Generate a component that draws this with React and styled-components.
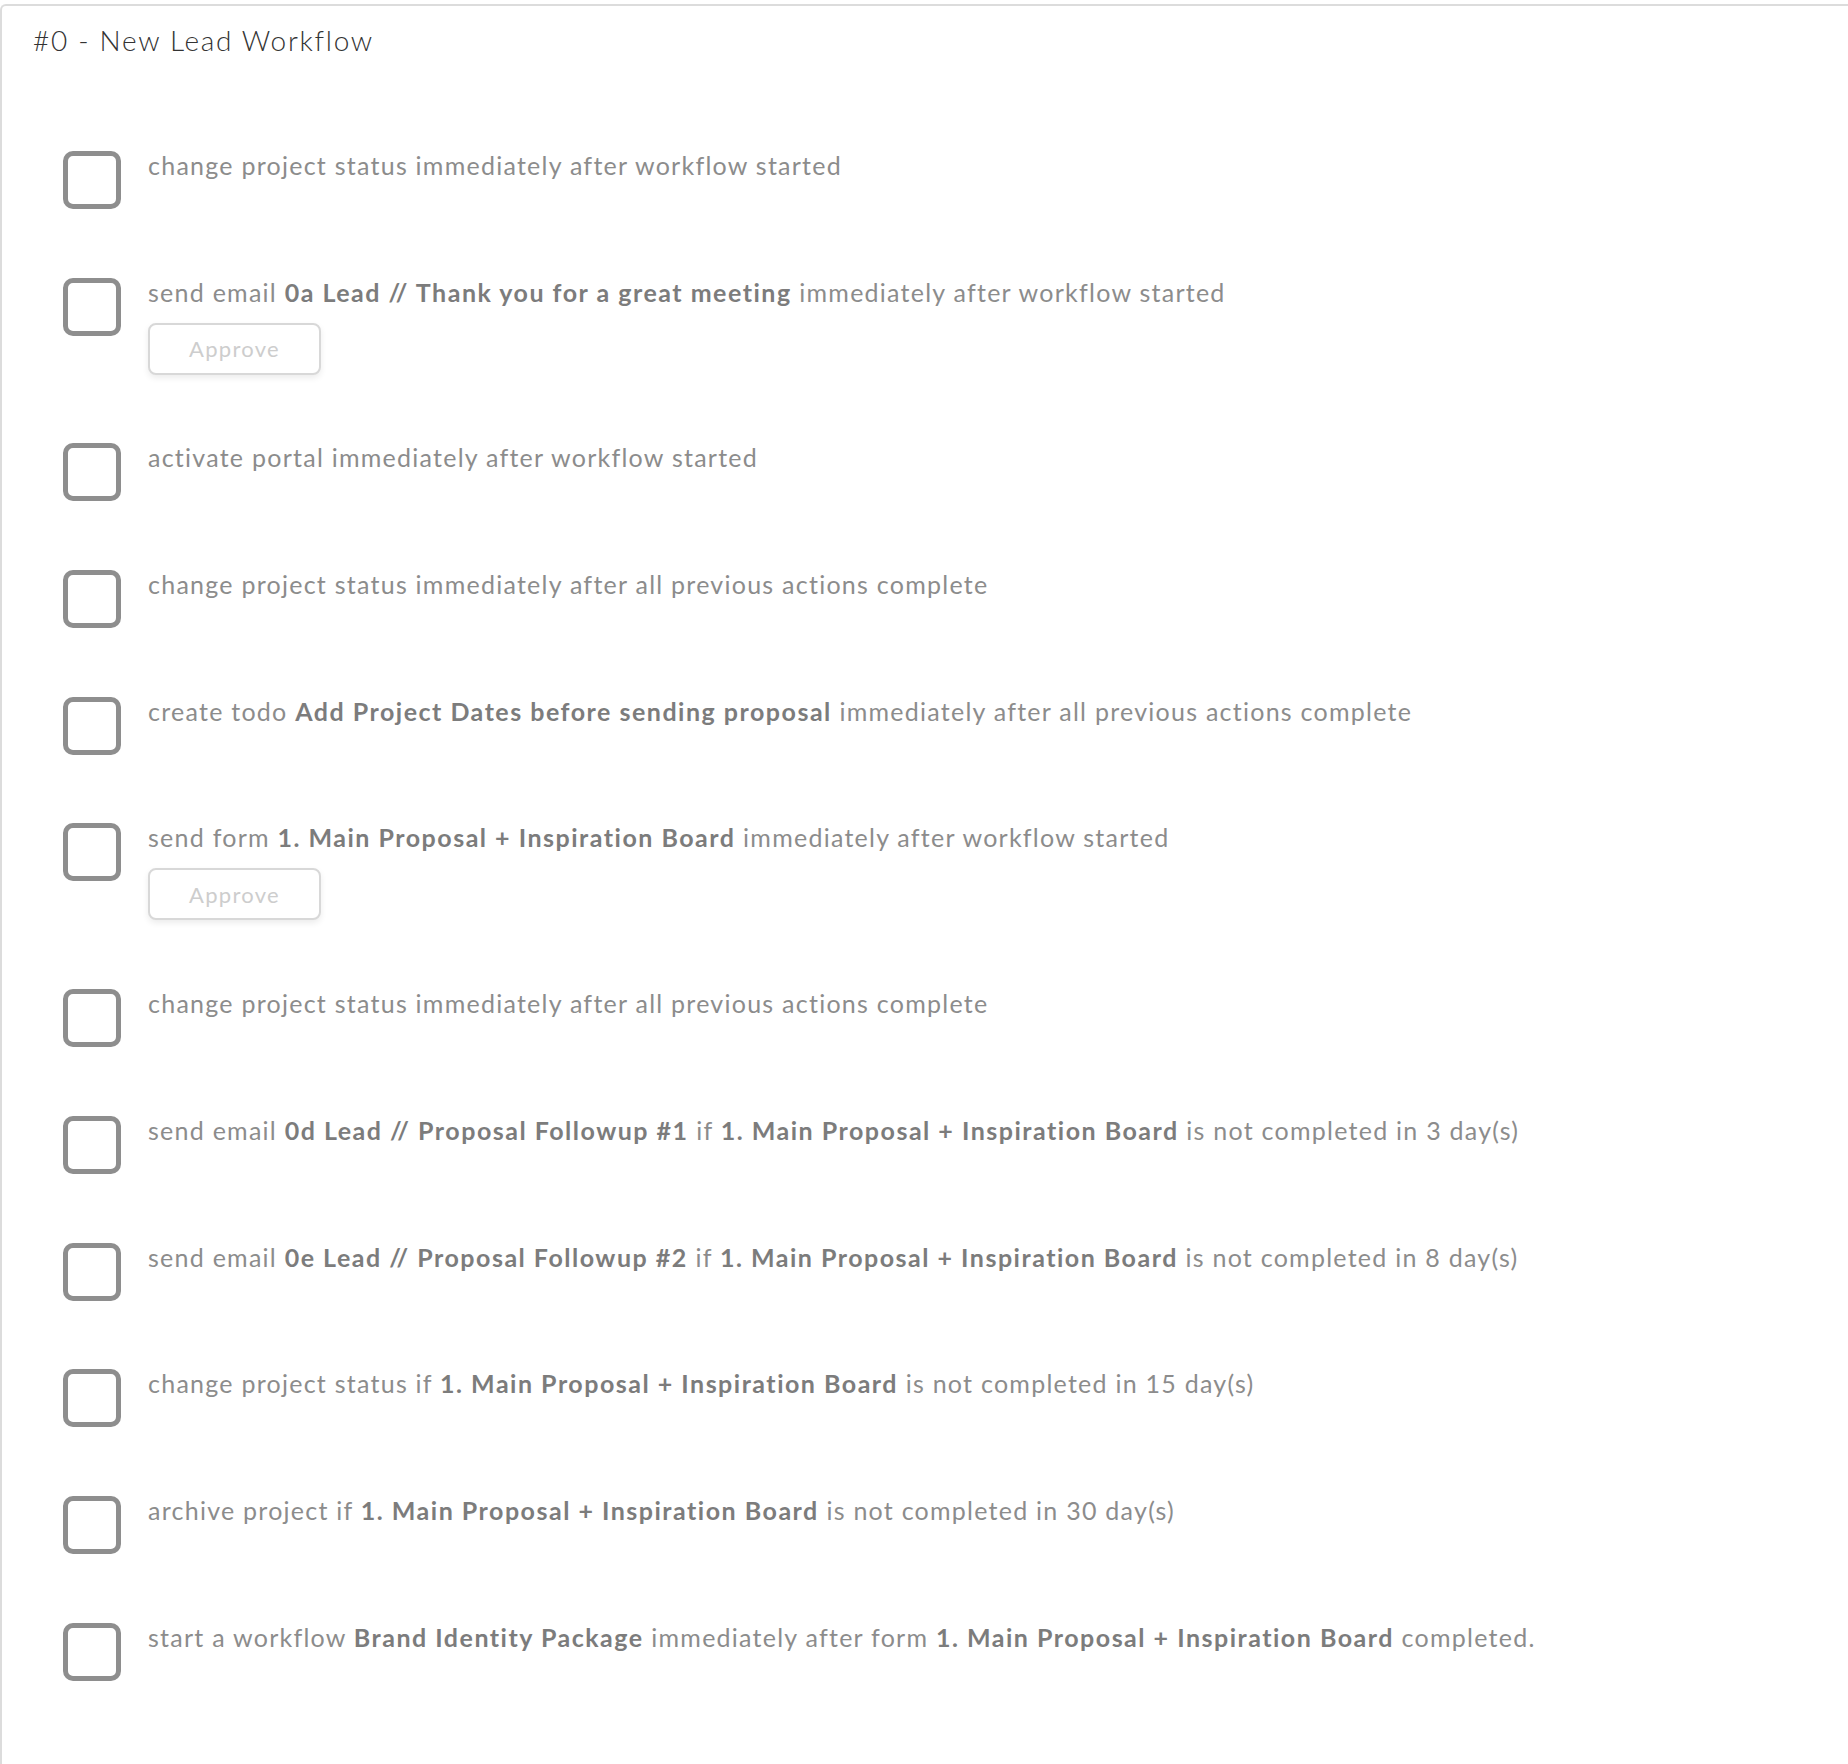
import React from 'react';
import styled, { createGlobalStyle } from 'styled-components';

const GlobalStyle = createGlobalStyle`
  html, body {
    margin: 0;
    padding: 0;
    background: #fff;
  }
  body {
    font-family: Lato, "Open Sans", sans-serif;
  }
`;

const Card = styled.section`
  margin-top: 4px;
  width: 1900px;
  min-height: 1800px;
  border-top: 2px solid #dcdcdc;
  border-left: 2px solid #dcdcdc;
  border-top-left-radius: 6px;
  padding: 14px 0 0 31px;
  box-sizing: border-box;
`;

const Title = styled.h1`
  margin: 0;
  font-size: 28px;
  line-height: 40px;
  font-weight: 300;
  letter-spacing: 1.7px;
  color: #333;
`;

const ActionList = styled.ul`
  list-style: none;
  margin: 0;
  padding: 91px 0 0 30px;
`;

const ActionItem = styled.li`
  display: flex;
  align-items: flex-start;
  gap: 27px;
  margin-bottom: 68.7px;
`;

const Checkbox = styled.span`
  flex: none;
  width: 58px;
  height: 58px;
  box-sizing: border-box;
  border: 5px solid #8e8e8e;
  border-radius: 10px;
`;

const Body = styled.div`
  display: flex;
  flex-direction: column;
  align-items: flex-start;
`;

const Sentence = styled.p`
  margin: 0;
  font-size: 25px;
  line-height: 28px;
  letter-spacing: 1.25px;
  color: #8c8c8c;

  b {
    font-weight: 700;
    letter-spacing: 1.5px;
    color: #7c7c7c;
  }
`;

const ApproveButton = styled.button`
  margin-top: 17px;
  width: 173px;
  height: 52px;
  border: 2px solid #d8d8d8;
  border-radius: 8px;
  background: #fff;
  box-shadow: 0 3px 6px rgba(0, 0, 0, 0.08);
  font-family: Lato, "Open Sans", sans-serif;
  font-size: 22px;
  letter-spacing: 1.3px;
  color: #cdcdcd;
  cursor: pointer;
`;

const FORM = '1. Main Proposal + Inspiration Board';

const actions = [
  { parts: ['change project status immediately after workflow started'] },
  {
    parts: ['send email ', { b: '0a Lead // Thank you for a great meeting' }, ' immediately after workflow started'],
    approve: true,
  },
  { parts: ['activate portal immediately after workflow started'] },
  { parts: ['change project status immediately after all previous actions complete'] },
  { parts: ['create todo ', { b: 'Add Project Dates before sending proposal' }, ' immediately after all previous actions complete'] },
  { parts: ['send form ', { b: FORM }, ' immediately after workflow started'], approve: true },
  { parts: ['change project status immediately after all previous actions complete'] },
  { parts: ['send email ', { b: '0d Lead // Proposal Followup #1' }, ' if ', { b: FORM }, ' is not completed in 3 day(s)'] },
  { parts: ['send email ', { b: '0e Lead // Proposal Followup #2' }, ' if ', { b: FORM }, ' is not completed in 8 day(s)'] },
  { parts: ['change project status if ', { b: FORM }, ' is not completed in 15 day(s)'] },
  { parts: ['archive project if ', { b: FORM }, ' is not completed in 30 day(s)'] },
  { parts: ['start a workflow ', { b: 'Brand Identity Package' }, ' immediately after form ', { b: FORM }, ' completed.'] },
];

const App = () => (
  <>
    <GlobalStyle />
    <Card>
      <Title>#0 - New Lead Workflow</Title>
      <ActionList>
        {actions.map((action, i) => (
          <ActionItem key={i}>
            <Checkbox />
            <Body>
              <Sentence>
                {action.parts.map((p, j) => (typeof p === 'string' ? p : <b key={j}>{p.b}</b>))}
              </Sentence>
              {action.approve && <ApproveButton>Approve</ApproveButton>}
            </Body>
          </ActionItem>
        ))}
      </ActionList>
    </Card>
  </>
);

export default App;
